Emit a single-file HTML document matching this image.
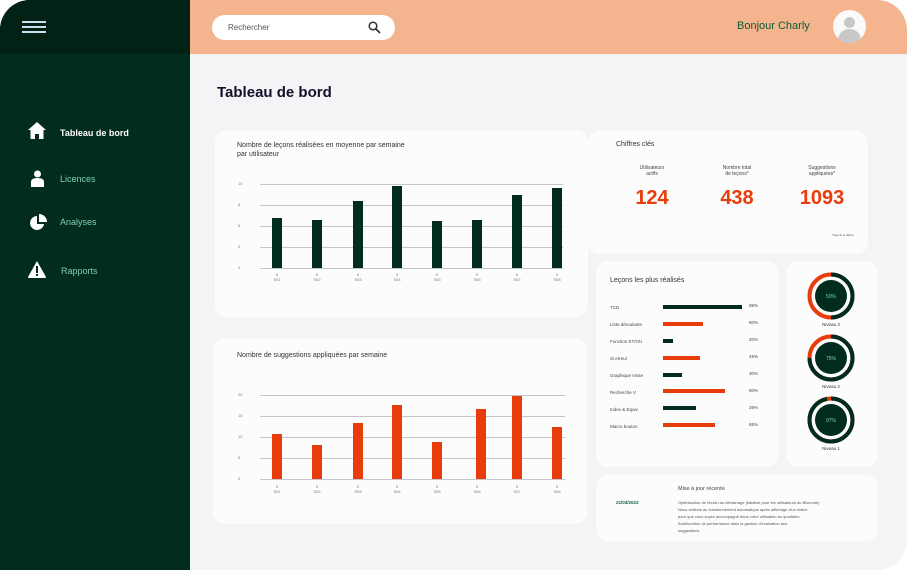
<!DOCTYPE html>
<html><head><meta charset="utf-8"><style>
*{margin:0;padding:0;box-sizing:border-box}
body{width:907px;height:570px;background:#fff;font-family:"Liberation Sans",sans-serif;position:relative;overflow:hidden}
.frame{position:absolute;left:0;top:0;width:907px;height:570px;background:#f4f4f7;border-radius:30px 30px 30px 0;overflow:hidden}
.side{position:absolute;left:0;top:0;width:190px;height:570px;background:#012c1e}
.sidetop{position:absolute;left:0;top:0;width:190px;height:54px;background:#012214}
.top{position:absolute;left:190px;top:0;width:717px;height:54px;background:#f4b58e}
.card{position:absolute;background:#fcfcfd;border-radius:12px}
.t{position:absolute;white-space:nowrap}
.nav{position:absolute;left:60px;font-size:9px;color:#7fd0b0}
.grid{position:absolute;height:1px;background:#c4c4cc}
.bar{position:absolute;width:10px}
.ax{position:absolute;font-size:4px;color:#777;line-height:5px;text-align:center;width:14px}
.yl{position:absolute;font-size:4px;color:#777}
</style></head><body>
<div class="frame">
<div class="side"></div><div class="sidetop"></div>
<div style="position:absolute;left:22px;top:21px;width:24px;height:2px;background:#cde"></div>
<div style="position:absolute;left:22px;top:26px;width:24px;height:2px;background:#cde"></div>
<div style="position:absolute;left:22px;top:31px;width:24px;height:2px;background:#cde"></div>
<svg style="position:absolute;left:28px;top:122px" width="18" height="17" viewBox="0 0 18 17"><path d="M9 0L0 8h2.5v9h4.5v-5h4v5h4.5V8H18z" fill="#fff"/></svg>
<div class="nav" style="top:128px;color:#fff;font-weight:bold">Tableau de bord</div>
<svg style="position:absolute;left:31px;top:170px" width="13" height="17" viewBox="0 0 13 17"><circle cx="6.5" cy="4" r="3.5" fill="#fff"/><path d="M0 17v-5q0-4 6.5-4t6.5 4v5z" fill="#fff"/></svg>
<div class="nav" style="top:174px">Licences</div>
<svg style="position:absolute;left:29px;top:214px" width="18" height="18" viewBox="0 0 18 18"><path d="M8 2a7 7 0 1 0 7 8H8z" fill="#fff"/><path d="M10 0v8h8a8 8 0 0 0-8-8z" fill="#fff"/></svg>
<div class="nav" style="top:217px">Analyses</div>
<svg style="position:absolute;left:28px;top:261px" width="18" height="17" viewBox="0 0 18 17"><path d="M9 0L0 16q0 1 1 1h16q1 0 1-1z" fill="#fff"/><rect x="8" y="5" width="2" height="7" fill="#012c1e"/><rect x="8" y="13" width="2" height="2" fill="#012c1e"/></svg>
<div class="nav" style="top:266px;left:61px">Rapports</div>

<div class="top"></div>
<div style="position:absolute;left:212px;top:15px;width:183px;height:25px;background:#fff;border-radius:13px"></div>
<div class="t" style="left:228px;top:23px;font-size:8px;color:#555">Rechercher</div>
<svg style="position:absolute;left:368px;top:21px" width="13" height="13" viewBox="0 0 13 13"><circle cx="5" cy="5" r="3.8" fill="none" stroke="#333" stroke-width="1.5"/><path d="M8 8l4 4" stroke="#333" stroke-width="1.8"/></svg>
<div class="t" style="left:737px;top:20px;font-size:11px;color:#0d5a36">Bonjour Charly</div>
<div style="position:absolute;left:833px;top:10px;width:33px;height:33px;border-radius:50%;background:#fafafa;overflow:hidden"><div style="position:absolute;left:11px;top:7px;width:11px;height:11px;border-radius:50%;background:#c8c8c8"></div><div style="position:absolute;left:5px;top:19px;width:23px;height:20px;border-radius:11px 11px 0 0;background:#c8c8c8"></div></div>

<div class="t" style="left:217px;top:84px;font-size:15px;font-weight:bold;color:#111128">Tableau de bord</div>

<div class="card" style="left:215px;top:130px;width:373px;height:187px"></div>
<div class="t" style="left:237px;top:141px;font-size:7px;color:#333;line-height:9px">Nombre de leçons réalisées en moyenne par semaine<br>par utilisateur</div>
<div class="yl" style="left:238px;top:181px">10</div><div class="yl" style="left:238px;top:202px">8</div><div class="yl" style="left:238px;top:223px">6</div><div class="yl" style="left:238px;top:244px">4</div><div class="yl" style="left:238px;top:265px">2</div>
<div class="grid" style="left:260px;top:184px;width:303px"></div>
<div class="grid" style="left:260px;top:205px;width:303px"></div>
<div class="grid" style="left:260px;top:226px;width:303px"></div>
<div class="grid" style="left:260px;top:247px;width:303px"></div>
<div class="grid" style="left:260px;top:268px;width:303px"></div>
<div class="bar" style="left:272px;top:218px;height:50px;background:#012c1e"></div>
<div class="bar" style="left:312px;top:220px;height:48px;background:#012c1e"></div>
<div class="bar" style="left:353px;top:201px;height:67px;background:#012c1e"></div>
<div class="bar" style="left:392px;top:186px;height:82px;background:#012c1e"></div>
<div class="bar" style="left:432px;top:221px;height:47px;background:#012c1e"></div>
<div class="bar" style="left:472px;top:220px;height:48px;background:#012c1e"></div>
<div class="bar" style="left:512px;top:195px;height:73px;background:#012c1e"></div>
<div class="bar" style="left:552px;top:188px;height:80px;background:#012c1e"></div>
<div class="ax" style="left:270px;top:272px">II<br>S01</div><div class="ax" style="left:310px;top:272px">II<br>S02</div><div class="ax" style="left:351px;top:272px">II<br>S03</div><div class="ax" style="left:390px;top:272px">II<br>S04</div><div class="ax" style="left:430px;top:272px">II<br>S05</div><div class="ax" style="left:470px;top:272px">II<br>S06</div><div class="ax" style="left:510px;top:272px">II<br>S07</div><div class="ax" style="left:550px;top:272px">II<br>S08</div>

<div class="card" style="left:213px;top:338px;width:374px;height:186px"></div>
<div class="t" style="left:237px;top:352px;font-size:7px;color:#333">Nombre de suggestions appliquées par semaine</div>
<div class="yl" style="left:238px;top:392px">20</div><div class="yl" style="left:238px;top:413px">15</div><div class="yl" style="left:238px;top:434px">10</div><div class="yl" style="left:238px;top:455px">5</div><div class="yl" style="left:238px;top:476px">0</div>
<div class="grid" style="left:260px;top:395px;width:305px"></div>
<div class="grid" style="left:260px;top:416px;width:305px"></div>
<div class="grid" style="left:260px;top:437px;width:305px"></div>
<div class="grid" style="left:260px;top:458px;width:305px"></div>
<div class="grid" style="left:260px;top:479px;width:305px"></div>
<div class="bar" style="left:272px;top:434px;height:45px;background:#e63d0a"></div>
<div class="bar" style="left:312px;top:445px;height:34px;background:#e63d0a"></div>
<div class="bar" style="left:353px;top:423px;height:56px;background:#e63d0a"></div>
<div class="bar" style="left:392px;top:405px;height:74px;background:#e63d0a"></div>
<div class="bar" style="left:432px;top:442px;height:37px;background:#e63d0a"></div>
<div class="bar" style="left:476px;top:409px;height:70px;background:#e63d0a"></div>
<div class="bar" style="left:512px;top:396px;height:83px;background:#e63d0a"></div>
<div class="bar" style="left:552px;top:427px;height:52px;background:#e63d0a"></div>
<div class="ax" style="left:270px;top:484px">II<br>S01</div><div class="ax" style="left:310px;top:484px">II<br>S02</div><div class="ax" style="left:351px;top:484px">II<br>S03</div><div class="ax" style="left:390px;top:484px">II<br>S04</div><div class="ax" style="left:430px;top:484px">II<br>S05</div><div class="ax" style="left:470px;top:484px">II<br>S06</div><div class="ax" style="left:510px;top:484px">II<br>S07</div><div class="ax" style="left:550px;top:484px">II<br>S08</div>

<div class="card" style="left:588px;top:131px;width:280px;height:123px"></div>
<div class="t" style="left:616px;top:141px;font-size:7px;color:#333">Chiffres clés</div>
<div class="t" style="left:630px;top:165px;font-size:5px;color:#444;text-align:center;width:44px">Utilisateurs<br>actifs</div>
<div class="t" style="left:715px;top:165px;font-size:5px;color:#444;text-align:center;width:44px">Nombre total<br>de leçons*</div>
<div class="t" style="left:800px;top:165px;font-size:5px;color:#444;text-align:center;width:44px">Suggestions<br>appliquées*</div>
<div class="t" style="left:620px;top:187px;font-size:20px;font-weight:bold;color:#e63d0a;width:64px;text-align:center">124</div>
<div class="t" style="left:705px;top:187px;font-size:20px;font-weight:bold;color:#e63d0a;width:64px;text-align:center">438</div>
<div class="t" style="left:790px;top:187px;font-size:20px;font-weight:bold;color:#e63d0a;width:64px;text-align:center">1093</div>
<div class="t" style="left:832px;top:233px;font-size:3px;color:#555">*depuis le début</div>

<div class="card" style="left:596px;top:261px;width:182px;height:206px"></div>
<div class="t" style="left:610px;top:277px;font-size:7px;color:#333">Leçons les plus réalisés</div>
<div style="position:absolute;left:610px;top:299px;font-size:4.5px;color:#444;line-height:17px">TCD<br>Liste déroulante<br>Fonction ET/OU<br>Si erreur<br>Graphique mixte<br>Recherche V<br>Index & Equiv<br>Macro bouton</div>
<div style="position:absolute;left:749px;top:297px;font-size:4.5px;color:#444;line-height:17px">98%<br>80%<br>20%<br>45%<br>30%<br>80%<br>39%<br>65%</div>
<div class="bar" style="left:663px;top:305px;width:79px;height:4px;background:#012c1e"></div>
<div class="bar" style="left:663px;top:322px;width:40px;height:4px;background:#e63d0a"></div>
<div class="bar" style="left:663px;top:339px;width:10px;height:4px;background:#012c1e"></div>
<div class="bar" style="left:663px;top:356px;width:37px;height:4px;background:#e63d0a"></div>
<div class="bar" style="left:663px;top:373px;width:19px;height:4px;background:#012c1e"></div>
<div class="bar" style="left:663px;top:389px;width:62px;height:4px;background:#e63d0a"></div>
<div class="bar" style="left:663px;top:406px;width:33px;height:4px;background:#012c1e"></div>
<div class="bar" style="left:663px;top:423px;width:52px;height:4px;background:#e63d0a"></div>

<div class="card" style="left:786px;top:261px;width:92px;height:206px"></div>
<svg style="position:absolute;left:805px;top:271px" width="52" height="180" viewBox="0 0 52 180">
<g transform="translate(26,25)"><circle r="21.5" fill="none" stroke="#e63d0a" stroke-width="4"/><circle r="21.5" fill="none" stroke="#012c1e" stroke-width="4" stroke-dasharray="67.5 200" transform="rotate(-90)"/><circle r="16" fill="#012c1e"/><text y="2" font-size="5" fill="#7fd0b0" text-anchor="middle" font-family="Liberation Sans">50%</text></g>
<g transform="translate(26,87)"><circle r="21.5" fill="none" stroke="#e63d0a" stroke-width="4"/><circle r="21.5" fill="none" stroke="#012c1e" stroke-width="4" stroke-dasharray="101.3 200" transform="rotate(-90)"/><circle r="16" fill="#012c1e"/><text y="2" font-size="5" fill="#7fd0b0" text-anchor="middle" font-family="Liberation Sans">75%</text></g>
<g transform="translate(26,149)"><circle r="21.5" fill="none" stroke="#e63d0a" stroke-width="4"/><circle r="21.5" fill="none" stroke="#012c1e" stroke-width="4" stroke-dasharray="131 200" transform="rotate(-90)"/><circle r="16" fill="#012c1e"/><text y="2" font-size="5" fill="#7fd0b0" text-anchor="middle" font-family="Liberation Sans">97%</text></g>
</svg>
<div class="t" style="left:811px;top:322px;font-size:4.5px;color:#333;width:40px;text-align:center">Niveau 3</div>
<div class="t" style="left:811px;top:384px;font-size:4.5px;color:#333;width:40px;text-align:center">Niveau 2</div>
<div class="t" style="left:811px;top:446px;font-size:4.5px;color:#333;width:40px;text-align:center">Niveau 1</div>

<div class="card" style="left:596px;top:475px;width:282px;height:66px"></div>
<div class="t" style="left:678px;top:486px;font-size:5.5px;color:#444">Mise à jour récente</div>
<div class="t" style="left:616px;top:500px;font-size:4.5px;font-weight:bold;color:#0d5a36">21/03/2023</div>
<div class="t" style="left:678px;top:499px;font-size:4px;color:#555;line-height:7px">Optimisation de l'écran au démarrage (fiabilisé pour les utilisateurs du Blocnote)<br>Nous veillons au fonctionnement automatique après affichage d'un indice<br>pour que vous soyez accompagné dans votre utilisation au quotidien.<br>Amélioration de performance dans la gestion d'évaluation des<br>suggestions</div>
</div>
</body></html>
